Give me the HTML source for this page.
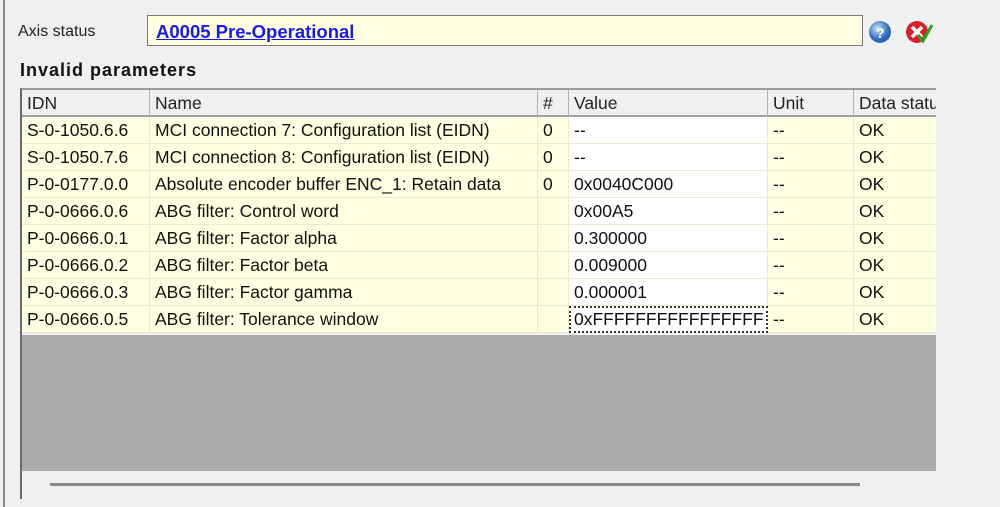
<!DOCTYPE html>
<html><head><meta charset="utf-8"><style>
*{margin:0;padding:0;box-sizing:border-box}
body{width:1000px;height:507px;background:#f0f0f0;font-family:"Liberation Sans",sans-serif;position:relative;overflow:hidden;color:#111}
.vl{position:absolute;left:3px;top:0;width:2px;height:507px;background:#8a8a8a}
.lbl{position:absolute;left:18px;top:23px;font-size:16px;color:#222}
.box{position:absolute;left:147px;top:15px;width:716px;height:31px;background:#ffffe1;border:1px solid #7a7a7a}
.box a{position:absolute;left:8px;top:5px;font-size:18.5px;font-weight:bold;color:#1a1aee;text-decoration:underline}
.ttl{position:absolute;left:20px;top:60px;font-size:18px;letter-spacing:1px;font-weight:bold;color:#111}
.grid{position:absolute;left:20px;top:88px;width:916px;height:411px;border-left:2px solid #6a6a6a;border-top:2px solid #9a9a9a;background:#f0f0f0;overflow:hidden}
.gray{position:absolute;left:0;top:245px;width:914px;height:136px;background:#ababab}
.row{position:absolute;left:0;height:27px;width:914px}
.c{position:absolute;top:0;height:27px;line-height:27px;font-size:17.5px;padding-left:5px;border-right:1px solid #ece9d0;border-bottom:1px solid #ece9d0;white-space:nowrap;overflow:hidden;background:#ffffe1}
.h .c{background:#f0f0f0;border-right:1px solid #b0b0b0;border-bottom:2px solid #a0a0a0;color:#222}
.v{background:#fff!important}
.sb{position:absolute;left:28px;top:393px;width:810px;height:3px;background:#8a8a8a}
</style></head><body>
<div class="vl"></div>
<div class="lbl">Axis status</div>
<div class="box"><a>A0005 Pre-Operational</a></div>
<svg style="position:absolute;left:868px;top:19px" width="26" height="26"><defs><radialGradient id="g" cx="40%" cy="35%"><stop offset="0" stop-color="#cfe6fb"/><stop offset="1" stop-color="#2a67b8"/></radialGradient></defs><circle cx="12" cy="13" r="11" fill="url(#g)"/><text x="8" y="19" font-size="14" font-weight="bold" fill="#fff" font-family="Liberation Sans">?</text></svg>
<svg style="position:absolute;left:904px;top:18px" width="30" height="28"><circle cx="13" cy="14" r="11" fill="#d9202a"/><path d="M8 9 L18 19 M18 9 L8 19" stroke="#fff" stroke-width="3.5"/><path d="M14 17 L19 23 L28 7" stroke="#2aa02a" stroke-width="3" fill="none"/></svg>
<div class="ttl">Invalid parameters</div>
<div class="grid">
<div class="row h" style="top:0">
<div class="c" style="left:0;width:128px">IDN</div><div class="c" style="left:128px;width:388px">Name</div><div class="c" style="left:516px;width:31px">#</div><div class="c" style="left:547px;width:199px">Value</div><div class="c" style="left:746px;width:86px">Unit</div><div class="c" style="left:832px;width:90px">Data status</div>
</div>
<div class="row" style="top:27px"><div class="c" style="left:0;width:128px">S-0-1050.6.6</div><div class="c" style="left:128px;width:388px">MCI connection 7: Configuration list (EIDN)</div><div class="c" style="left:516px;width:31px">0</div><div class="c v" style="left:547px;width:199px">--</div><div class="c" style="left:746px;width:86px">--</div><div class="c" style="left:832px;width:90px">OK</div></div>
<div class="row" style="top:54px"><div class="c" style="left:0;width:128px">S-0-1050.7.6</div><div class="c" style="left:128px;width:388px">MCI connection 8: Configuration list (EIDN)</div><div class="c" style="left:516px;width:31px">0</div><div class="c v" style="left:547px;width:199px">--</div><div class="c" style="left:746px;width:86px">--</div><div class="c" style="left:832px;width:90px">OK</div></div>
<div class="row" style="top:81px"><div class="c" style="left:0;width:128px">P-0-0177.0.0</div><div class="c" style="left:128px;width:388px">Absolute encoder buffer ENC_1: Retain data</div><div class="c" style="left:516px;width:31px">0</div><div class="c v" style="left:547px;width:199px">0x0040C000</div><div class="c" style="left:746px;width:86px">--</div><div class="c" style="left:832px;width:90px">OK</div></div>
<div class="row" style="top:108px"><div class="c" style="left:0;width:128px">P-0-0666.0.6</div><div class="c" style="left:128px;width:388px">ABG filter: Control word</div><div class="c" style="left:516px;width:31px"></div><div class="c v" style="left:547px;width:199px">0x00A5</div><div class="c" style="left:746px;width:86px">--</div><div class="c" style="left:832px;width:90px">OK</div></div>
<div class="row" style="top:135px"><div class="c" style="left:0;width:128px">P-0-0666.0.1</div><div class="c" style="left:128px;width:388px">ABG filter: Factor alpha</div><div class="c" style="left:516px;width:31px"></div><div class="c v" style="left:547px;width:199px">0.300000</div><div class="c" style="left:746px;width:86px">--</div><div class="c" style="left:832px;width:90px">OK</div></div>
<div class="row" style="top:162px"><div class="c" style="left:0;width:128px">P-0-0666.0.2</div><div class="c" style="left:128px;width:388px">ABG filter: Factor beta</div><div class="c" style="left:516px;width:31px"></div><div class="c v" style="left:547px;width:199px">0.009000</div><div class="c" style="left:746px;width:86px">--</div><div class="c" style="left:832px;width:90px">OK</div></div>
<div class="row" style="top:189px"><div class="c" style="left:0;width:128px">P-0-0666.0.3</div><div class="c" style="left:128px;width:388px">ABG filter: Factor gamma</div><div class="c" style="left:516px;width:31px"></div><div class="c v" style="left:547px;width:199px">0.000001</div><div class="c" style="left:746px;width:86px">--</div><div class="c" style="left:832px;width:90px">OK</div></div>
<div class="row" style="top:216px"><div class="c" style="left:0;width:128px">P-0-0666.0.5</div><div class="c" style="left:128px;width:388px">ABG filter: Tolerance window</div><div class="c" style="left:516px;width:31px"></div><div class="c v" style="left:547px;width:199px;border:2px dotted #333;padding-left:3px;line-height:23px">0xFFFFFFFFFFFFFFFF</div><div class="c" style="left:746px;width:86px">--</div><div class="c" style="left:832px;width:90px">OK</div></div>
<div class="gray"></div>
<div class="sb"></div>
</div>
</body></html>
